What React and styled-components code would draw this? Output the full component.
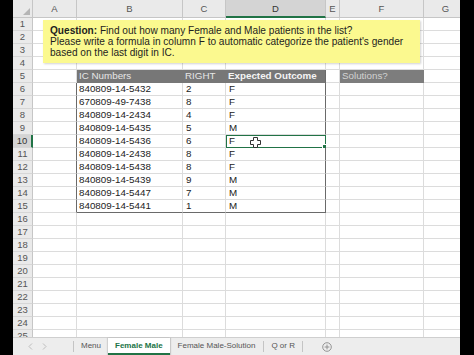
import React from "react";
import styled, { createGlobalStyle } from "styled-components";

const GlobalStyle = createGlobalStyle`
  html, body { margin: 0; padding: 0; background: #000; }
  body { font-family: "Liberation Sans", Arial, sans-serif; }
  * { box-sizing: border-box; }
`;

const GREEN = "#217346";
const GRID = "#dcdcdc";
const DARK = "#6a6a6a";
const HEAD = "#777777";

const Frame = styled.div`
  width: 474px;
  height: 355px;
  background: #000;
  padding: 0 14px 0 13px;
  display: flex;
  flex-direction: column;
  overflow: hidden;
`;

const SheetArea = styled.div`
  position: relative;
  flex: 1;
  overflow: hidden;
  background: #fff;
`;

const Grid = styled.div`
  display: grid;
  grid-template-columns: 20px 44px 106px 43px 100px 14px 84px 44px;
  grid-template-rows: 18px repeat(25, 13px);
  width: 455px;
`;

const Corner = styled.div`
  background: #e9e9e9;
  border-right: 1px solid #c6c6c6;
  border-bottom: 1px solid #c6c6c6;
  display: flex;
  align-items: flex-end;
  justify-content: flex-end;
  padding: 0 2px 2px 0;
`;

const ColHead = styled.div`
  background: ${(p) => (p.$sel ? "#d4d4d4" : "#eaeaea")};
  border-right: 1px solid #c6c6c6;
  border-bottom: ${(p) => (p.$sel ? `2px solid ${GREEN}` : "1px solid #c6c6c6")};
  color: ${(p) => (p.$sel ? "#333" : "#555")};
  font-size: 9.5px;
  display: flex;
  align-items: center;
  justify-content: center;
  padding-top: ${(p) => (p.$sel ? "1px" : "0")};
`;

const RowHead = styled.div`
  background: ${(p) => (p.$sel ? "#d4d4d4" : "#eaeaea")};
  border-right: ${(p) => (p.$sel ? `2px solid ${GREEN}` : "1px solid #c6c6c6")};
  border-bottom: 1px solid #d6d6d6;
  color: ${(p) => (p.$sel ? "#333" : "#555")};
  font-size: 9.5px;
  display: flex;
  align-items: ${(p) => (p.$clip ? "flex-start" : "center")};
  justify-content: center;
  line-height: 12px;
`;

const Cell = styled.div`
  position: relative;
  background: ${(p) => p.$fill || "#fff"};
  border-right: 1px solid ${(p) => p.$rightColor || GRID};
  border-bottom: 1px solid ${(p) => p.$bottomColor || GRID};
  color: ${(p) => p.$color || "#222"};
  font-weight: ${(p) => (p.$bold ? "bold" : "normal")};
  font-size: 9.8px;
  line-height: 12px;
  padding-left: ${(p) => p.$pad || 2}px;
  white-space: nowrap;
  overflow: visible;
  ${(p) =>
    p.$selected &&
    `
    outline: 1px solid ${GREEN};
    outline-offset: -1px;
    border-right-color: ${GREEN};
    border-bottom-color: ${GREEN};
    &::after {
      content: "";
      position: absolute;
      right: -3px;
      bottom: -3px;
      width: 4px;
      height: 4px;
      background: ${GREEN};
      border: 1px solid #fff;
    }
  `}
`;

const NoteBox = styled.div`
  position: absolute;
  left: 30px;
  top: 20px;
  width: 377px;
  height: 43px;
  background: #fbf98f;
  box-shadow: 1px 1px 2px rgba(0, 0, 0, 0.18);
  padding: 5px 7px;
  font-size: 10.1px;
  line-height: 11px;
  color: #1e1e1e;
  white-space: nowrap;
`;

const Strong = styled.b`
  font-weight: bold;
`;

const Cursor = styled.svg`
  position: absolute;
  left: 237px;
  top: 137px;
`;

const TabBar = styled.div`
  height: 18px;
  background: #ededed;
  border-top: 1px solid #cfcfcf;
  display: flex;
  align-items: stretch;
  font-size: 8px;
  color: #444;
`;

const Nav = styled.div`
  width: 60px;
  display: flex;
  align-items: center;
  gap: 9px;
  padding-left: 15px;
`;

const Sep = styled.div`
  width: 1px;
  background: #c4c4c4;
  margin: 3px 0;
`;

const Tab = styled.div`
  display: flex;
  align-items: center;
  padding: 0 ${(p) => p.$px || 7}px;
  background: ${(p) => (p.$active ? "#fff" : "transparent")};
  color: ${(p) => (p.$active ? GREEN : "#555")};
  font-weight: ${(p) => (p.$active ? "bold" : "normal")};
  border-bottom: ${(p) => (p.$active ? `2px solid ${GREEN}` : "2px solid transparent")};
  box-shadow: ${(p) => (p.$active ? "1px 0 1px rgba(0,0,0,0.15), -1px 0 1px rgba(0,0,0,0.12)" : "none")};
  white-space: nowrap;
`;

const AddTab = styled.div`
  display: flex;
  align-items: center;
  padding-left: 19px;
`;

const rows = [
  ["840809-14-5432", "2", "F"],
  ["670809-49-7438", "8", "F"],
  ["840809-14-2434", "4", "F"],
  ["840809-14-5435", "5", "M"],
  ["840809-14-5436", "6", "F"],
  ["840809-14-2438", "8", "F"],
  ["840809-14-5438", "8", "F"],
  ["840809-14-5439", "9", "M"],
  ["840809-14-5447", "7", "M"],
  ["840809-14-5441", "1", "M"],
];

const cols = ["A", "B", "C", "D", "E", "F", "G"];

function buildRow(r) {
  const cells = [];
  cells.push(
    <RowHead key="h" $sel={r === 10} $clip={r === 25}>
      {r}
    </RowHead>
  );
  const inTable = r >= 5 && r <= 15;
  const isHead = r === 5;
  const data = r >= 6 && r <= 15 ? rows[r - 6] : null;
  const last = r === 15;

  cells.push(<Cell key="A" $rightColor={inTable && !isHead ? DARK : undefined} />);

  if (isHead) {
    cells.push(
      <Cell key="B" $fill={HEAD} $rightColor={HEAD} $bottomColor={HEAD} $color="#e6e6e6">
        IC Numbers
      </Cell>
    );
    cells.push(
      <Cell key="C" $fill={HEAD} $rightColor={HEAD} $bottomColor={HEAD} $color="#e6e6e6">
        RIGHT
      </Cell>
    );
    cells.push(
      <Cell key="D" $fill={HEAD} $rightColor={DARK} $bottomColor={HEAD} $color="#f4f4f4" $bold>
        Expected Outcome
      </Cell>
    );
  } else if (data) {
    cells.push(
      <Cell key="B" $bottomColor={last ? DARK : undefined}>
        {data[0]}
      </Cell>
    );
    cells.push(
      <Cell key="C" $pad={3} $bottomColor={last ? DARK : undefined}>
        {data[1]}
      </Cell>
    );
    cells.push(
      <Cell
        key="D"
        $pad={3}
        $rightColor={DARK}
        $bottomColor={last ? DARK : undefined}
        $selected={r === 10}
      >
        {data[2]}
      </Cell>
    );
  } else {
    cells.push(<Cell key="B" />, <Cell key="C" />, <Cell key="D" />);
  }

  cells.push(<Cell key="E" />);
  if (isHead) {
    cells.push(
      <Cell key="F" $fill="#7d7d7d" $rightColor="#7d7d7d" $bottomColor="#7d7d7d" $color="#d2d2d2">
        Solutions?
      </Cell>
    );
  } else {
    cells.push(<Cell key="F" />);
  }
  cells.push(<Cell key="G" />);
  return <React.Fragment key={r}>{cells}</React.Fragment>;
}

export default function App() {
  const rowNums = Array.from({ length: 25 }, (_, i) => i + 1);
  return (
    <>
      <GlobalStyle />
      <Frame>
        <SheetArea>
          <Grid>
            <Corner>
              <svg width="7" height="7" viewBox="0 0 7 7">
                <polygon points="7,0 7,7 0,7" fill="#b5b5b5" />
              </svg>
            </Corner>
            {cols.map((c) => (
              <ColHead key={c} $sel={c === "D"}>
                {c}
              </ColHead>
            ))}
            {rowNums.map((r) => buildRow(r))}
          </Grid>
          <NoteBox>
            <div>
              <Strong>Question:</Strong> Find out how many Female and Male patients in the list?
            </div>
            <div>Please write a formula in column F to automatic categorize the patient's gender</div>
            <div>based on the last digit in IC.</div>
          </NoteBox>
          <Cursor width="11" height="11" viewBox="0 0 11 11">
            <path
              d="M3.5 0.5 H7.5 V3.5 H10.5 V7.5 H7.5 V10.5 H3.5 V7.5 H0.5 V3.5 H3.5 Z"
              fill="#fff"
              stroke="#333"
              strokeWidth="1"
            />
          </Cursor>
        </SheetArea>
        <TabBar>
          <Nav>
            <svg width="5" height="7" viewBox="0 0 5 7">
              <path d="M4 0.5 L1 3.5 L4 6.5" fill="none" stroke="#bdbdbd" strokeWidth="1" />
            </svg>
            <svg width="5" height="7" viewBox="0 0 5 7">
              <path d="M1 0.5 L4 3.5 L1 6.5" fill="none" stroke="#bdbdbd" strokeWidth="1" />
            </svg>
          </Nav>
          <Sep />
          <Tab>Menu</Tab>
          <Tab $active>Female Male</Tab>
          <Tab $px={8}>Female Male-Solution</Tab>
          <Sep />
          <Tab>Q or R</Tab>
          <Sep />
          <AddTab>
            <svg width="10" height="10" viewBox="0 0 10 10">
              <circle cx="5" cy="5" r="4.3" fill="none" stroke="#8a8a8a" strokeWidth="0.9" />
              <path d="M5 2.6 V7.4 M2.6 5 H7.4" stroke="#8a8a8a" strokeWidth="0.9" />
            </svg>
          </AddTab>
        </TabBar>
      </Frame>
    </>
  );
}
